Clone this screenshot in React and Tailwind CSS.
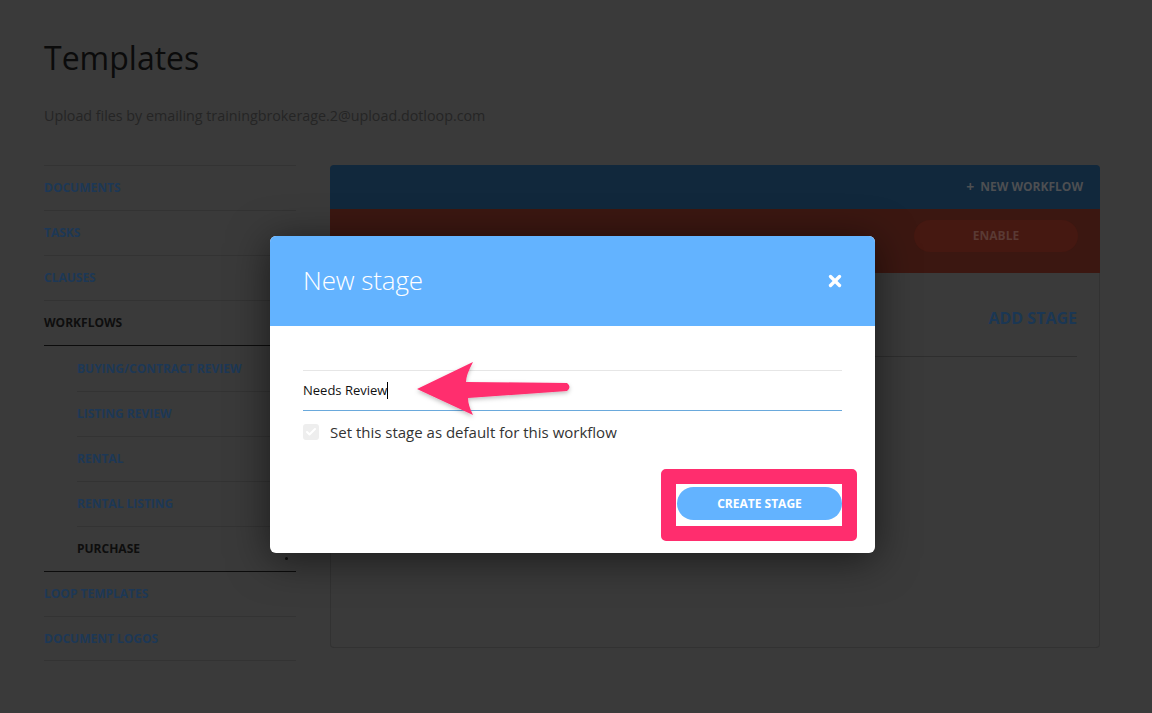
import { X, Check } from 'lucide-react';

const topNav = ['DOCUMENTS', 'TASKS', 'CLAUSES'];
const workflows = ['BUYING/CONTRACT REVIEW', 'LISTING REVIEW', 'RENTAL', 'RENTAL LISTING', 'PURCHASE'];

function NavRow({ label, active, className = '' }) {
    return (
        <div className={`h-[45px] flex items-center text-[12px] font-bold ${active ? 'text-[#0e0e0e]' : 'text-[#1d3856]'} ${className}`}>
            {label}
        </div>
    );
}

function Sidebar() {
    return (
        <div className="w-[252px] shrink-0">
            {topNav.map((item) => (
                <NavRow key={item} label={item} className="border-t border-[#333333]" />
            ))}
            <NavRow label="WORKFLOWS" active className="border-t border-[#333333]" />
            <div className="border-t border-[#0c0c0c] pl-[33px]">
                {workflows.map((item, i) => (
                    <div
                        key={item}
                        className={`h-[45px] flex items-center justify-between pr-[8px] ${i > 0 ? 'border-t border-[#333333]' : ''}`}
                    >
                        <span className={`text-[12px] font-bold ${item === 'PURCHASE' ? 'text-[#0e0e0e]' : 'text-[#1d3856]'}`}>
                            {item}
                        </span>
                        {item === 'PURCHASE' && (
                            <div className="flex flex-col gap-[4px] pt-[4px]">
                                <span className="w-[3px] h-[3px] rounded-full bg-[#0d0d0d]" />
                                <span className="w-[3px] h-[3px] rounded-full bg-[#0d0d0d]" />
                                <span className="w-[3px] h-[3px] rounded-full bg-[#0d0d0d]" />
                            </div>
                        )}
                    </div>
                ))}
            </div>
            <NavRow label="LOOP TEMPLATES" className="h-[45px] border-t border-[#0c0c0c]" />
            <NavRow label="DOCUMENT LOGOS" className="border-t border-b border-[#333333]" />
        </div>
    );
}

function WorkflowPanel() {
    return (
        <div className="w-[770px] h-[483px] flex flex-col">
            <div className="h-[44px] bg-[#11283c] rounded-t-[4px] flex items-center justify-end pr-[17px] text-[12px] font-bold text-[#4d4f52]">
                <span className="mr-[6px] text-[14px] leading-none">+</span>NEW WORKFLOW
            </div>
            <div className="h-[64px] bg-[#3b1711] flex items-start justify-end pt-[11px] pr-[22px]">
                <div className="w-[164px] h-[32px] rounded-full bg-[#451811] flex items-center justify-center text-[12px] font-bold text-[#5a3a34]">
                    ENABLE
                </div>
            </div>
            <div className="flex-1 border border-t-0 border-[#323232] rounded-b-[4px] px-[22px]">
                <div className="pt-[33px] pb-[26px] border-b border-[#2e2e2e] flex justify-end">
                    <span className="text-[16px] leading-[24px] font-bold text-[#1b3754]">ADD STAGE</span>
                </div>
            </div>
        </div>
    );
}

function NewStageModal() {
    return (
        <div className="absolute left-[270px] top-[236px] w-[605px] h-[317px] bg-white rounded-[6px] overflow-hidden shadow-[0_6px_40px_rgba(0,0,0,0.55)]">
            <div className="h-[90px] bg-[#63b3ff] flex items-center justify-between px-[33px]">
                <span className="text-[26px] font-light tracking-[-0.1px] text-white pb-[2px]">New stage</span>
                <X size={18} strokeWidth={4.5} className="text-white mr-[-2px]" />
            </div>
            <div className="px-[33px] pt-[44px]">
                <div className="h-px bg-[#e6e6e6]" />
                <div className="h-[40px] border-b border-[#6aa9dc] flex items-center">
                    <span className="text-[13px] text-[#111]">Needs Review</span>
                    <span className="w-px h-[17px] bg-black" />
                </div>
                <div className="mt-[11px] h-[20px] flex items-center gap-[11px]">
                    <div className="w-[16px] h-[16px] rounded-[3px] bg-[#eeeeee] flex items-center justify-center">
                        <Check size={12} strokeWidth={4} className="text-white" />
                    </div>
                    <span className="text-[15px] text-[#333]">Set this stage as default for this workflow</span>
                </div>
                <div className="mt-[45px] flex justify-end">
                    <button className="w-[165px] h-[33px] rounded-full bg-[#63b3ff] text-white text-[12px] font-bold">
                        CREATE STAGE
                    </button>
                </div>
            </div>
        </div>
    );
}

export default function App() {
    return (
        <div className="relative w-full min-h-screen h-[713px] bg-[#3a3a3a] overflow-hidden font-['Open_Sans',sans-serif]">
            <div className="px-[44px] pt-[38px]">
                <h1 className="text-[32px] leading-[40px] text-[#0b0b0b]">Templates</h1>
                <p className="mt-[28px] text-[14.3px] leading-[20px] text-[#252525]">
                    Upload files by emailing trainingbrokerage.2@upload.dotloop.com
                </p>
                <div className="mt-[39px] flex gap-[34px]">
                    <Sidebar />
                    <WorkflowPanel />
                </div>
            </div>

            <NewStageModal />

            {/* annotation: highlight box */}
            <div className="absolute left-[661px] top-[469px] w-[196px] h-[72px] border-[15px] border-[#ff2d6e] rounded-[5px] pointer-events-none" />

            {/* annotation: arrow */}
            <svg className="absolute left-0 top-0 pointer-events-none" width="1152" height="713" viewBox="0 0 1152 713">
                <defs>
                    <filter id="arrowShadow" x="-20%" y="-40%" width="140%" height="180%">
                        <feDropShadow dx="0" dy="2" stdDeviation="2" floodColor="#000" floodOpacity="0.25" />
                    </filter>
                </defs>
                <path
                    d="M417,389 L473,362 Q466,375 466,382 L567,383 Q572,387 567,391 L468,398 Q468,405 473,415 Z"
                    fill="#ff2d6e"
                    filter="url(#arrowShadow)"
                />
            </svg>
        </div>
    );
}
